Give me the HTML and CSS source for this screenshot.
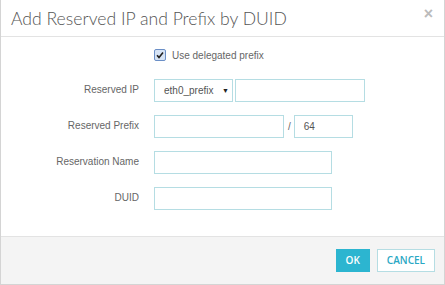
FILE: index.html
```html
<!DOCTYPE html>
<html lang="en">
<head>
    <meta charset="UTF-8">
    <title>Add Reserved IP and Prefix by DUID</title>
    <link rel="stylesheet" href="styles.css">
</head>
<body>
    <div class="dialog">
        <div class="header">
            <h1>Add Reserved IP and Prefix by DUID</h1>
            <span class="close">&times;</span>
        </div>

        <div class="content">
            <div class="check-row">
                <span class="checkbox">
                    <svg width="8" height="8" viewBox="0 0 8 8"><path d="M1 4.2 L3 6.4 L7 1.4" fill="none" stroke="#222" stroke-width="1.6"/></svg>
                </span>
                <span>Use delegated prefix</span>
            </div>

            <div class="form">
                <label>Reserved IP</label>
                <div class="fields">
                    <div class="select">eth0_prefix <span class="arrow">&#9660;</span></div>
                    <div class="input ip"></div>
                </div>

                <label>Reserved Prefix</label>
                <div class="fields">
                    <div class="input prefix"></div>
                    <span class="slash">/</span>
                    <div class="input len">64</div>
                </div>

                <label>Reservation Name</label>
                <div class="fields">
                    <div class="input wide"></div>
                </div>

                <label>DUID</label>
                <div class="fields">
                    <div class="input wide"></div>
                </div>
            </div>
        </div>

        <div class="footer">
            <button class="btn ok">OK</button>
            <button class="btn cancel">CANCEL</button>
        </div>
    </div>
</body>
</html>
```

FILE: styles.css
```css
body {
    margin: 0;
    font-family: "Liberation Sans", Arial, sans-serif;
    background: white;
}

.dialog {
    width: 443px;
    height: 284px;
    border: 1px solid #d4d4d4;
    border-top: none;
    display: flex;
    flex-direction: column;
}

.header {
    height: 36px;
    border-bottom: 1px solid #e3e3e3;
    display: flex;
    align-items: center;
    justify-content: space-between;
    padding: 0 11px 0 10px;
}

.header h1 {
    margin: 0;
    font-family: "Lato", sans-serif;
    font-weight: 300;
    font-size: 17.6px;
    color: #555;
}

.close {
    font-size: 16px;
    color: #bbb;
    font-weight: bold;
    margin-top: -9px;
}

.content {
    flex: 1;
    padding-top: 12px;
    font-size: 10px;
    color: #666;
}

.check-row {
    display: flex;
    align-items: center;
    gap: 6px;
    padding-left: 153px;
    height: 12px;
}

.checkbox {
    width: 10px;
    height: 10px;
    border: 1px solid #6b8fc7;
    border-radius: 2px;
    background: #d6e3f5;
    display: flex;
    align-items: center;
    justify-content: center;
}

.form {
    display: grid;
    grid-template-columns: 138px auto;
    column-gap: 15px;
    row-gap: 13px;
    margin-top: 18px;
    align-items: center;
}

.form label {
    text-align: right;
    margin-top: -2px;
}

.fields {
    display: flex;
    align-items: center;
}

.input, .select {
    height: 21px;
    border: 1px solid #b5dde3;
    box-sizing: content-box;
    display: flex;
    align-items: center;
    padding-left: 9px;
    color: #555;
}

.select {
    width: 65px;
    padding-right: 3px;
    justify-content: space-between;
    margin-right: 2px;
}

.arrow {
    font-size: 7px;
    color: #222;
}

.ip {
    width: 119px;
}

.prefix {
    width: 119px;
}

.slash {
    margin: 0 3px 0 4px;
}

.len {
    width: 48px;
}

.wide {
    width: 167px;
}

.footer {
    height: 46px;
    background: #f4f4f4;
    border-top: 1px solid #e3e3e3;
    display: flex;
    justify-content: flex-end;
    align-items: center;
    gap: 7px;
    padding-right: 9px;
    padding-bottom: 1px;
}

.btn {
    height: 23px;
    font-family: "Open Sans", sans-serif;
    font-weight: 600;
    font-size: 10px;
    padding: 0 10px;
}

.ok {
    background: #2cb5d0;
    color: white;
    border: none;
}

.cancel {
    background: white;
    color: #2aa8c4;
    border: 1px solid #b5dde3;
    padding: 0 9px;
}
```
